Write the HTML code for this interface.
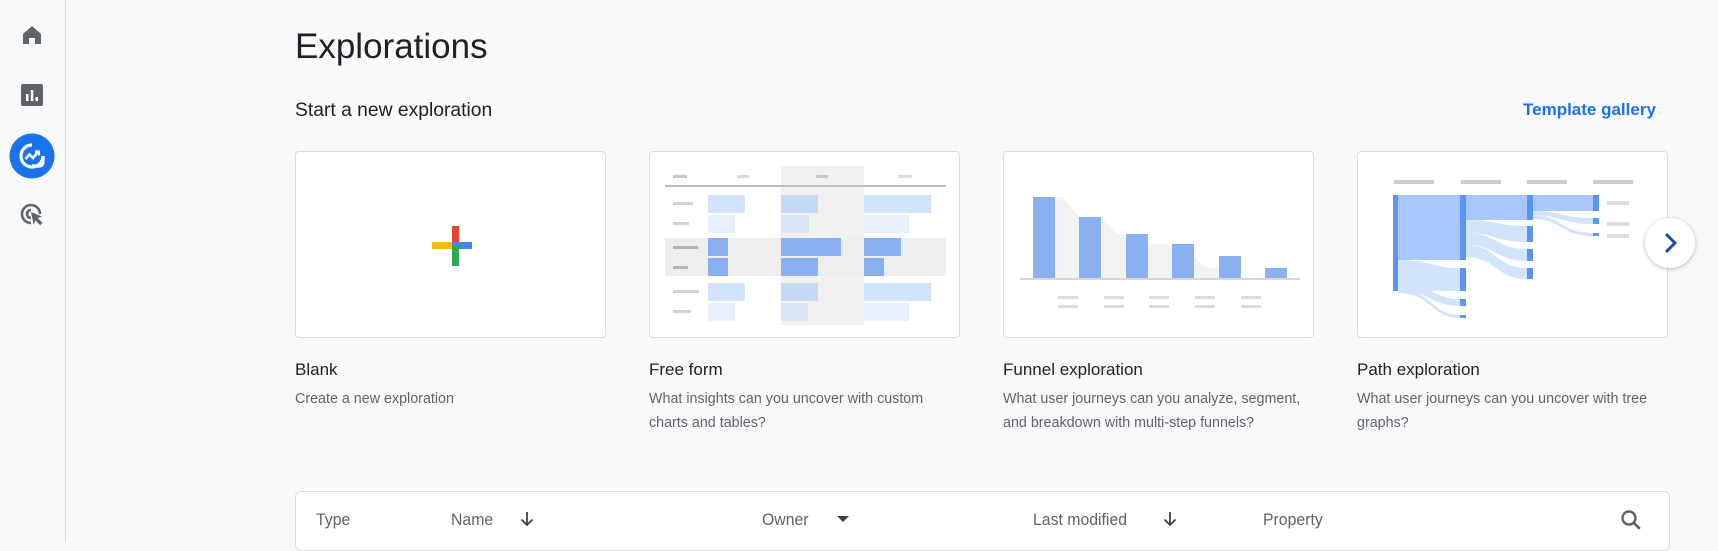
<!DOCTYPE html>
<html><head><meta charset="utf-8"><style>
*{margin:0;padding:0;box-sizing:border-box}
body{width:1718px;height:542px;overflow:hidden;background:#f8f9fa;font-family:"Liberation Sans",Arial,sans-serif;position:relative;color:#202124}
.side{position:absolute;left:0;top:0;width:66px;height:542px;border-right:1px solid #dadce0;background:#f8f9fa}
.abs{position:absolute}
.card{position:absolute;top:151px;width:311px;height:187px;background:#fff;border:1px solid #dadce0;border-radius:4px;overflow:hidden}
.ct{position:absolute;top:360px;font-size:17px;color:#202124}
.cd{position:absolute;top:387px;font-size:14.3px;line-height:24px;color:#5f6368;width:300px}
.th{position:absolute;top:510px;font-size:17px;color:#5f6368;transform:scaleX(.93);transform-origin:left}
</style></head><body>
<div class="side">
<svg class="abs" style="left:20px;top:23px" width="24" height="24" viewBox="0 0 24 24"><path d="M12 3L3 11v10h6v-6h6v6h6V11z" fill="#5f6368"/></svg>
<svg class="abs" style="left:20px;top:83px" width="24" height="24" viewBox="0 0 24 24"><rect x="1" y="1" width="22" height="22" rx="2" fill="#5f6368"/><rect x="6" y="11" width="2.5" height="7" fill="#fff"/><rect x="10.8" y="7" width="2.5" height="11" fill="#fff"/><rect x="15.5" y="14" width="2.5" height="4" fill="#fff"/></svg>
<svg class="abs" style="left:9px;top:133px" width="46" height="46" viewBox="0 0 46 46"><circle cx="23" cy="23" r="22.5" fill="#1a73e8"/><path d="M23 12a11 11 0 1 0 11 11" fill="none" stroke="#fff" stroke-width="3.2"/><path d="M34 23v6.5a3.5 3.5 0 0 1-3.5 3.5H23" fill="none" stroke="#fff" stroke-width="3.2"/><path d="M16.5 26l4-4.5 3.5 3.5 5-6" fill="none" stroke="#fff" stroke-width="2.6"/><path d="M26 18.5h4v4" fill="none" stroke="#fff" stroke-width="2.2"/></svg>
<svg class="abs" style="left:19px;top:202px" width="26" height="26" viewBox="0 0 26 26"><path d="M12 3a9 9 0 1 0 0 18" fill="none" stroke="#5f6368" stroke-width="2.6"/><path d="M21 12A9 9 0 0 0 12 3" fill="none" stroke="#5f6368" stroke-width="2.6"/><path d="M12 8a4 4 0 1 0 0 8" fill="none" stroke="#5f6368" stroke-width="2.6"/><path d="M12 10l11 4.5-4.3 1.6 4.8 4.8-2.3 2.3-4.8-4.8-1.8 4.3z" fill="#5f6368"/></svg>
</div>

<div class="abs" style="left:295px;top:27px;font-size:35px;color:#202124">Explorations</div>
<div class="abs" style="left:295px;top:100px;font-size:19.3px;color:#202124">Start a new exploration</div>
<div class="abs" style="left:1523px;top:100px;font-size:17px;color:#1a73e8;font-weight:bold">Template gallery</div>

<div class="card" style="left:295px">
<svg width="311" height="187" viewBox="0 0 311 187"><g transform="translate(-295,-151)">
<rect x="451" y="225" width="7" height="21" fill="#ea4335"/>
<rect x="451" y="241" width="20" height="7" fill="#4285f4"/>
<rect x="451" y="244" width="7" height="21" fill="#34a853"/>
<rect x="431" y="241" width="20" height="7" fill="#fbbc04"/>
</g></svg></div>

<div class="card" style="left:649px">
<svg width="311" height="187" viewBox="0 0 311 187"><g transform="translate(-649,-151)">
<rect x="780" y="165" width="83" height="159" fill="#f1f1f1"/>
<rect x="664" y="237" width="281" height="38" fill="#eeeeee"/>
<rect x="672" y="174" width="14" height="3" fill="#c8c8c8"/><rect x="736" y="174" width="12" height="3" fill="#dcdcdc"/><rect x="815" y="174" width="12" height="3" fill="#c8c8c8"/><rect x="897" y="174" width="14" height="3" fill="#dcdcdc"/>
<rect x="664" y="184" width="281" height="2" fill="#bdbdbd"/>
<g fill="#d2d2d2"><rect x="672" y="201" width="20" height="3"/><rect x="672" y="221" width="16" height="3"/><rect x="672" y="245" width="25" height="3" fill="#b5b5b5"/><rect x="672" y="265" width="15" height="3" fill="#b5b5b5"/><rect x="672" y="289" width="26" height="3"/><rect x="672" y="309" width="18" height="3"/></g>
<g fill="#d2e3fc"><rect x="707" y="194" width="37" height="18"/><rect x="863" y="194" width="67" height="18"/><rect x="707" y="282" width="37" height="18"/><rect x="863" y="282" width="67" height="18"/></g>
<g fill="#c6d7f2"><rect x="780" y="194" width="37" height="18"/><rect x="780" y="282" width="37" height="18"/></g>
<g fill="#e8f0fe"><rect x="707" y="214" width="27" height="18"/><rect x="863" y="214" width="45" height="18"/><rect x="707" y="302" width="27" height="18"/><rect x="863" y="302" width="45" height="18"/></g>
<g fill="#dbe4f2"><rect x="780" y="214" width="28" height="18"/><rect x="780" y="302" width="27" height="18"/></g>
<g fill="#8ab0f2"><rect x="707" y="237" width="20" height="18"/><rect x="707" y="257" width="20" height="18"/><rect x="780" y="237" width="60" height="18"/><rect x="780" y="257" width="37" height="18"/><rect x="863" y="237" width="37" height="18"/><rect x="863" y="257" width="20" height="18"/></g>
</g></svg></div>

<div class="card" style="left:1003px">
<svg width="311" height="187" viewBox="0 0 311 187"><g transform="translate(-1003,-151)">
<path d="M1054 196h8l16 20h22l16 17h9l8 3 15 7h18l15 12h10l15 12h24v11H1054z" fill="#f3f3f3"/>
<rect x="1019" y="277" width="280" height="2" fill="#d6d6d6"/>
<g fill="#8ab0f2"><rect x="1032" y="196" width="22" height="81"/><rect x="1078" y="216" width="22" height="61"/><rect x="1125" y="233" width="22" height="44"/><rect x="1171" y="243" width="22" height="34"/><rect x="1218" y="255" width="22" height="22"/><rect x="1264" y="267" width="22" height="10"/></g>
<g fill="#dcdcdc"><rect x="1057" y="295" width="20" height="3"/><rect x="1057" y="304" width="20" height="3"/><rect x="1103" y="295" width="20" height="3"/><rect x="1103" y="304" width="20" height="3"/><rect x="1148" y="295" width="20" height="3"/><rect x="1148" y="304" width="20" height="3"/><rect x="1194" y="295" width="20" height="3"/><rect x="1194" y="304" width="20" height="3"/><rect x="1240" y="295" width="20" height="3"/><rect x="1240" y="304" width="20" height="3"/></g>
</g></svg></div>

<div class="card" style="left:1357px">
<svg width="311" height="187" viewBox="0 0 311 187"><g transform="translate(-1357,-151)">
<g fill="#cccccc"><rect x="1393" y="179" width="40" height="4"/><rect x="1460" y="179" width="40" height="4"/><rect x="1526" y="179" width="40" height="4"/><rect x="1592" y="179" width="40" height="4"/></g>
<rect x="1397" y="194" width="62" height="65" fill="#a8c7fa"/>
<rect x="1465" y="194" width="61" height="25" fill="#a8c7fa"/>
<rect x="1532" y="194" width="60" height="16" fill="#a8c7fa"/>
<g fill="#d2e3fc">
<path d="M1397 259C1430 259 1430 267 1459 267V290H1397z"/>
<path d="M1397 282C1430 282 1430 298 1459 298V305C1430 305 1430 290 1397 290z"/>
<path d="M1397 288C1430 288 1430 314 1459 314V317C1430 317 1430 292 1397 292z"/>
<path d="M1465 219C1495 219 1495 225 1526 225V241C1495 241 1495 232 1465 232z"/>
<path d="M1465 232C1495 232 1495 248 1526 248V260C1495 260 1495 244 1465 244z"/>
<path d="M1465 244C1495 244 1495 267 1526 267V278C1495 278 1495 256 1465 256z"/>
<path d="M1532 210C1560 210 1560 217 1592 217V223C1560 223 1560 214 1532 214z"/>
<path d="M1532 214C1560 214 1560 232 1592 232V235C1560 235 1560 218 1532 218z"/>
</g>
<g fill="#5a95f0"><rect x="1392" y="194" width="5" height="96"/><rect x="1459" y="194" width="6" height="65"/><rect x="1459" y="267" width="6" height="23"/><rect x="1459" y="298" width="6" height="7"/><rect x="1459" y="314" width="6" height="3"/><rect x="1526" y="194" width="6" height="25"/><rect x="1526" y="225" width="6" height="16"/><rect x="1526" y="248" width="6" height="12"/><rect x="1526" y="267" width="6" height="11"/><rect x="1592" y="194" width="6" height="16"/><rect x="1592" y="217" width="6" height="6"/><rect x="1592" y="232" width="6" height="3"/></g>
<g fill="#dcdcdc"><rect x="1606" y="200" width="22" height="4"/><rect x="1606" y="221" width="22" height="4"/><rect x="1606" y="233" width="22" height="4"/></g>
</g></svg></div>

<div class="abs" style="left:1645px;top:218px;width:50px;height:50px;border-radius:50%;background:#fff;box-shadow:0 1px 4px rgba(60,64,67,.35)">
<svg width="50" height="50" viewBox="0 0 50 50"><path d="M21 16l9 9-9 9" fill="none" stroke="#174ea6" stroke-width="3"/></svg></div>

<div class="ct" style="left:295px">Blank</div>
<div class="cd" style="left:295px">Create a new exploration</div>
<div class="ct" style="left:649px">Free form</div>
<div class="cd" style="left:649px">What insights can you uncover with custom charts and tables?</div>
<div class="ct" style="left:1003px">Funnel exploration</div>
<div class="cd" style="left:1003px">What user journeys can you analyze, segment, and breakdown with multi-step funnels?</div>
<div class="ct" style="left:1357px">Path exploration</div>
<div class="cd" style="left:1357px">What user journeys can you uncover with tree graphs?</div>

<div class="abs" style="left:295px;top:491px;width:1375px;height:60px;background:#fff;border:1px solid #dadce0;border-radius:6px"></div>
<div class="th" style="left:316px">Type</div>
<div class="th" style="left:451px">Name</div>
<svg class="abs" style="left:518px;top:510px" width="18" height="18" viewBox="0 0 18 18"><path d="M9 2v13M3.5 9.5L9 15l5.5-5.5" fill="none" stroke="#3c4043" stroke-width="1.8"/></svg>
<div class="th" style="left:762px">Owner</div>
<svg class="abs" style="left:836px;top:514px" width="14" height="10" viewBox="0 0 14 10"><path d="M1 2h12L7 8z" fill="#3c4043"/></svg>
<div class="th" style="left:1033px">Last modified</div>
<svg class="abs" style="left:1161px;top:510px" width="18" height="18" viewBox="0 0 18 18"><path d="M9 2v13M3.5 9.5L9 15l5.5-5.5" fill="none" stroke="#3c4043" stroke-width="1.8"/></svg>
<div class="th" style="left:1263px">Property</div>
<svg class="abs" style="left:1619px;top:508px" width="24" height="24" viewBox="0 0 24 24"><circle cx="10" cy="10" r="6.5" fill="none" stroke="#5f6368" stroke-width="2.4"/><path d="M14.8 14.8l6 6" stroke="#5f6368" stroke-width="2.6"/></svg>
</body></html>
